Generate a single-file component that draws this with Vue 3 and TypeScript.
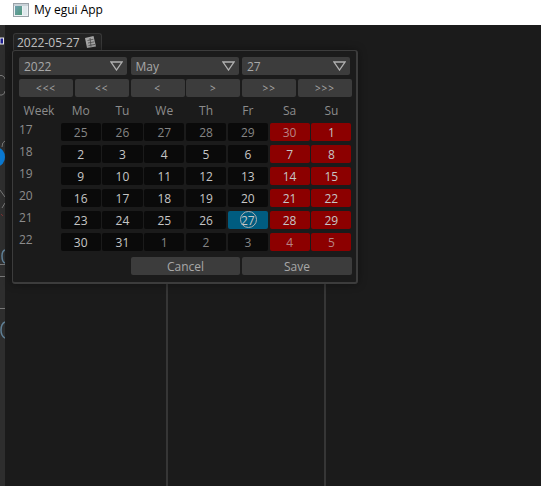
<script setup lang="ts">
interface Cell { label: string; muted?: boolean; weekend?: boolean; selected?: boolean }

const weekdays = ['Mo', 'Tu', 'We', 'Th', 'Fr', 'Sa', 'Su']
const navigation = ['<<<', '<<', '<', '>', '>>', '>>>']
const selects = ['2022', 'May', '27']

function week(number: string, days: [number, boolean?][]) {
  const cells: Cell[] = days.map(([day, muted], i) => ({
    label: String(day),
    muted,
    weekend: i >= 5,
    selected: day === 27 && !muted,
  }))
  return { number, cells }
}

const weeks = [
  week('17', [[25, true], [26, true], [27, true], [28, true], [29, true], [30, true], [1]]),
  week('18', [[2], [3], [4], [5], [6], [7], [8]]),
  week('19', [[9], [10], [11], [12], [13], [14], [15]]),
  week('20', [[16], [17], [18], [19], [20], [21], [22]]),
  week('21', [[23], [24], [25], [26], [27], [28], [29]]),
  week('22', [[30], [31], [1, true], [2, true], [3, true], [4, true], [5, true]]),
]
</script>

<template>
  <div class="window">
    <header class="titlebar">
      <svg class="app-icon" width="16" height="14" viewBox="0 0 16 14">
        <defs>
          <linearGradient id="pane" x1="0" y1="0" x2="1" y2="1">
            <stop offset="0" stop-color="#6f9fb0" />
            <stop offset="1" stop-color="#4f9a78" />
          </linearGradient>
        </defs>
        <rect x="0.5" y="0.5" width="15" height="13" fill="#eef2f4" stroke="#9aa2a8" />
        <rect x="1" y="1" width="14" height="2" fill="#c9d2d8" />
        <rect x="2" y="3" width="7" height="9" fill="url(#pane)" />
        <rect x="10" y="3" width="4" height="9" fill="#dfe8ec" />
      </svg>
      <span class="title">My egui App</span>
    </header>
    <main class="canvas">
      <svg class="strip" width="5" height="461" viewBox="0 25 5 461">
        <rect x="0" y="25" width="5" height="461" fill="#2e2e2e" />
        <rect x="0" y="38" width="3.5" height="6" fill="#1c1c90" stroke="#e6e6e6" />
        <path d="M0 75.5 H2 Q5 77 5 79 M5 91 Q5 94 2 95 H0" fill="none" stroke="#777" />
        <path d="M5 141 Q2 142 2 147" fill="none" stroke="#777" />
        <ellipse cx="-2" cy="157" rx="7" ry="9" fill="#0a78d0" />
        <path d="M0 190 L5 197 M5 203 L2 208" fill="none" stroke="#777" />
        <path d="M1 214 L3 216" fill="none" stroke="#7a3030" />
        <path d="M5 250 Q2 251 2 256 Q2 262 5 263" fill="none" stroke="#5f7f95" stroke-width="1.5" />
        <path d="M0 264.5 H5 M0 276.5 H5 M0 308.5 H5" fill="none" stroke="#777" />
        <path d="M5 322 Q1 324 1 330 Q1 336 5 338" fill="none" stroke="#5f7f95" stroke-width="1.5" />
      </svg>
      <div class="content">
        <div class="date-button">
          <span>2022-05-27</span>
          <svg width="14" height="14" viewBox="0 0 14 14">
            <path d="M2 3 L10.5 1 L13 11.5 L4 13 Z" fill="#a6a6a6" />
            <path d="M4.5 5.5 L10.5 4.2 M5 8 L11.4 6.8 M5.5 10.5 L12 9.4 M7 3 L8 11.5" stroke="#4a4a4a" stroke-width="0.8" />
          </svg>
        </div>
        <section class="popup">
          <div class="selects">
            <div v-for="item in selects" :key="item" class="control select">
              <span>{{ item }}</span>
              <svg width="13" height="10" viewBox="0 0 13 10">
                <path d="M1 1 H12 L6.5 9 Z" fill="none" stroke="#b0b0b0" stroke-width="1.3" />
              </svg>
            </div>
          </div>
          <div class="nav">
            <div v-for="item in navigation" :key="item" class="control nav-button">{{ item }}</div>
          </div>
          <div class="calendar">
            <div class="heading">Week</div>
            <div v-for="day in weekdays" :key="day" class="heading">{{ day }}</div>
            <template v-for="row in weeks" :key="row.number">
              <div class="week-number">{{ row.number }}</div>
              <div
                v-for="cell in row.cells"
                :key="row.number + cell.label"
                class="day"
                :class="{ muted: cell.muted, weekend: cell.weekend, selected: cell.selected }"
              >{{ cell.label }}</div>
            </template>
          </div>
          <div class="actions">
            <div class="control action">Cancel</div>
            <div class="control action">Save</div>
          </div>
        </section>
        <div class="rules">
          <span class="rule"></span>
          <span class="rule"></span>
        </div>
      </div>
    </main>
  </div>
</template>

<style>
html, body { margin: 0; background: #1b1b1b; }
</style>

<style scoped>
.window {
  width: 541px;
  height: 486px;
  overflow: hidden;
  display: flex;
  flex-direction: column;
  font-family: "Open Sans", "Noto Sans", sans-serif;
  color: #a8a8a8;
}
.titlebar {
  height: 25px;
  flex: none;
  display: flex;
  align-items: center;
  gap: 5px;
  padding: 0 0 6px 13px;
  box-sizing: border-box;
  background: #fff;
}
.title {
  font: 12px "Open Sans", sans-serif;
  color: #000;
}
.canvas {
  flex: 1;
  background: #1b1b1b;
  display: flex;
  min-height: 0;
}
.strip {
  flex: none;
  display: block;
}
.content {
  flex: 1;
  padding: 8px 0 0 8px;
  display: flex;
  flex-direction: column;
  align-items: flex-start;
}
.date-button {
  height: 17px;
  box-sizing: border-box;
  width: 89px;
  display: flex;
  align-items: center;
  gap: 3px;
  padding-left: 3px;
  font-size: 12px;
  color: #c8c8c8;
  background: #232323;
  border: 1px solid #383838;
  border-bottom: 0;
  border-radius: 3px 3px 0 0;
}
.popup {
  width: 346px;
  height: 234px;
  margin-left: -1px;
  box-sizing: border-box;
  padding: 6px 6px 0;
  background: #1b1b1b;
  border: 1px solid #3c3c3c;
  border-right-width: 2px;
  border-bottom-width: 2px;
  border-radius: 3px;
  box-shadow: 0 0 8px rgba(0, 0, 0, 0.4);
  display: flex;
  flex-direction: column;
  position: relative;
  z-index: 1;
  font-size: 12px;
  flex: none;
}
.control {
  height: 18px;
  background: #3c3c3c;
  border-radius: 2px;
  display: flex;
  align-items: center;
}
.selects {
  display: grid;
  grid-template-columns: repeat(3, 108px);
  column-gap: 3.5px;
}
.select {
  justify-content: space-between;
  padding: 0 4px 0 5px;
}
.nav {
  display: grid;
  grid-template-columns: repeat(6, 54px);
  column-gap: 1.8px;
  margin-top: 4px;
}
.nav-button {
  justify-content: center;
  font-size: 10px;
  letter-spacing: 1px;
}
.calendar {
  display: grid;
  grid-template-columns: 40px repeat(7, 40.2px);
  grid-auto-rows: 18px;
  column-gap: 1.6px;
  row-gap: 4px;
  margin-top: 4px;
  width: 333px;
}
.heading, .week-number {
  display: flex;
  align-items: center;
  justify-content: center;
  color: #8c8c8c;
}
.week-number {
  justify-content: flex-start;
  padding: 0 0 6px;
  box-sizing: border-box;
}
.day {
  display: flex;
  align-items: center;
  justify-content: center;
  background: #0a0a0a;
  border-radius: 2px;
  color: #c6c6c6;
}
.day.muted { color: #858585; }
.day.weekend { background: #8c0000; }
.day.weekend.muted { color: #b88484; }
.day.selected {
  background: #005c80;
  position: relative;
}
.day.selected::after {
  content: "";
  position: absolute;
  left: 12px;
  top: 0;
  width: 15px;
  height: 15px;
  border: 1.5px solid #b0b0b0;
  border-radius: 50%;
}
.actions {
  display: grid;
  grid-template-columns: 109px 110px;
  column-gap: 2px;
  margin: 6px 0 0 112px;
}
.action { justify-content: center; }
.rules {
  flex: 1;
  display: flex;
  gap: 156px;
  padding-left: 153px;
}
.rule {
  width: 2px;
  height: 100%;
  background: #363636;
}
</style>
